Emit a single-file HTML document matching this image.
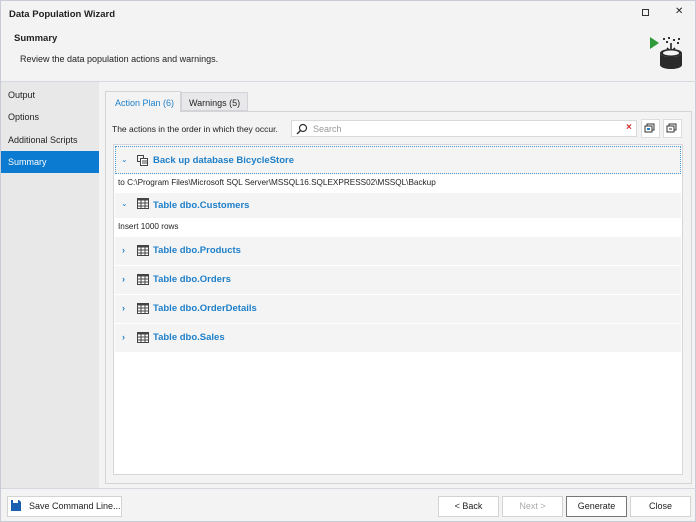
<!DOCTYPE html>
<html><head><style>
*{box-sizing:border-box;margin:0;padding:0}
body{width:696px;height:522px;overflow:hidden;font-family:"Liberation Sans",sans-serif;font-size:9px;color:#222;background:#f3f3f3;position:relative}
.win{position:absolute;left:0;top:0;width:696px;height:522px;border:1px solid #c9ccd6;background:#f3f3f3}
.abs{position:absolute}
.nav div{position:absolute;left:0;width:98px;height:22px;padding-left:7px;line-height:22px;font-size:9px}
.row{position:absolute;left:1px;right:1px;background:#f4f4f4}
.row .t{position:absolute;left:38px;color:#1e7fc9;font-weight:bold;font-size:9.5px}
.det{position:absolute;left:1px;right:1px;background:#fff;padding-left:3px;font-size:8.2px;line-height:18px}
.btn{position:absolute;top:495px;height:21px;background:#fff;border:1px solid #d3d3d3;text-align:center;line-height:19px;font-size:9px}
</style></head><body>
<div class="win">
<div class="abs" style="left:8px;top:8px;font-weight:bold;font-size:9.5px">Data Population Wizard</div>
<div class="abs" style="left:641px;top:8px;width:7px;height:7px;border:1px solid #333"></div>
<div class="abs" style="left:674px;top:5px;font-size:10px">✕</div>
<div class="abs" style="left:13px;top:32px;font-weight:bold;font-size:9.5px">Summary</div>
<div class="abs" style="left:19px;top:53px;font-size:9px">Review the data population actions and warnings.</div>
<svg class="abs" style="left:648px;top:34px" width="36" height="38" viewBox="0 0 36 38">
<polygon points="1,2 10,8 1,14" fill="#2e9a3a"/>
<g fill="#333"><rect x="14" y="3" width="2" height="2"/><rect x="19" y="2" width="2" height="2"/><rect x="24" y="4" width="2" height="2"/><rect x="29" y="3" width="2" height="2"/><rect x="17" y="6" width="2" height="2"/><rect x="28" y="7" width="2" height="2"/></g>
<path d="M22 8v9M18 13l4 4 4-4" stroke="#222" stroke-width="1.6" fill="none"/>
<path d="M11 18a11 4 0 0 0 22 0v12a11 4 0 0 1-22 0z" fill="#2a2a2a"/>
<ellipse cx="22" cy="18" rx="11" ry="4" fill="#2a2a2a"/>
<ellipse cx="22" cy="18" rx="8" ry="2.5" fill="#f3f3f3"/>
</svg>
<div class="abs" style="left:0;top:80px;width:696px;height:1px;background:#d6d8df"></div>
<div class="abs nav" style="left:0;top:81px;width:98px;height:406px;background:#e8e8e8">
<div style="top:2px">Output</div><div style="top:24px">Options</div><div style="top:47px">Additional Scripts</div>
<div style="top:69px;background:#0a7bd1;color:#fff">Summary</div></div>
<div class="abs" style="left:104px;top:90px;width:76px;height:21px;background:#f3f3f3;border:1px solid #d3d3d8;border-bottom:none;color:#1e7fc9;padding:6px 0 0 9px">Action Plan (6)</div>
<div class="abs" style="left:180px;top:91px;width:67px;height:19px;background:#e8e8ea;border:1px solid #d3d3d8;padding:5px 0 0 7px">Warnings (5)</div>
<div class="abs" style="left:104px;top:110px;width:587px;height:373px;border:1px solid #d3d3d8;border-top:none"></div>
<div class="abs" style="left:180px;top:110px;width:511px;height:1px;background:#d3d3d8"></div>
<div class="abs" style="left:111px;top:123px;font-size:8.5px">The actions in the order in which they occur.</div>
<div class="abs" style="left:290px;top:119px;width:346px;height:17px;background:#fff;border:1px solid #d9d9d9">
<svg class="abs" style="left:4px;top:2px" width="12" height="12"><circle cx="7" cy="5" r="3.5" stroke="#333" fill="none" stroke-width="1.2"/><path d="M4.5 7.5L1 11" stroke="#333" stroke-width="1.4"/></svg>
<span class="abs" style="left:21px;top:3px;color:#999">Search</span>
<span class="abs" style="left:334px;top:1px;color:#d03030;font-size:10px;font-weight:bold">×</span></div>
<div class="abs" style="left:640px;top:118px;width:19px;height:19px;background:#fff;border:1px solid #ddd"><svg width="17" height="17"><rect x="5" y="4" width="7" height="6" fill="none" stroke="#333"/><rect x="3" y="6" width="7" height="6" fill="#fff" stroke="#333"/><rect x="5" y="8" width="3" height="2" fill="#1e7fc9"/></svg></div>
<div class="abs" style="left:662px;top:118px;width:19px;height:19px;background:#fff;border:1px solid #ddd"><svg width="17" height="17"><rect x="5" y="4" width="7" height="6" fill="none" stroke="#333"/><rect x="3" y="6" width="7" height="6" fill="#fff" stroke="#333"/><path d="M5 9h3" stroke="#333"/></svg></div>
<div class="abs" style="left:112px;top:143px;width:570px;height:331px;background:#fff;border:1px solid #d6d6da">
<div class="row" style="top:1px;height:28px;border:1px dotted #4a9ad8"><span class="abs" style="left:5px;top:8px;color:#1e7fc9;font-size:8px">⌄</span>
<svg class="abs" style="left:21px;top:8px" width="12" height="12"><rect x="0.5" y="0.5" width="6" height="6" fill="none" stroke="#444"/><rect x="3.5" y="3.5" width="7" height="7" fill="#fff" stroke="#444"/><path d="M5 6h5M5 8h5" stroke="#444"/></svg><span class="t" style="top:8px;left:37px">Back up database BicycleStore</span></div>
<div class="det" style="top:29px;height:18px">to C:\Program Files\Microsoft SQL Server\MSSQL16.SQLEXPRESS02\MSSQL\Backup</div>
<div class="row" style="top:48px;height:25px"><span class="abs" style="left:6px;top:6px;color:#1e7fc9;font-size:8px">⌄</span><span class="t" style="top:7px">Table dbo.Customers</span></div>
<div class="det" style="top:73px;height:18px">Insert 1000 rows</div>
<div class="row" style="top:92px;height:28px"><span class="abs" style="left:7px;top:8px;color:#1e7fc9;font-weight:bold">›</span><span class="t" style="top:8px">Table dbo.Products</span></div>
<div class="row" style="top:121px;height:28px"><span class="abs" style="left:7px;top:8px;color:#1e7fc9;font-weight:bold">›</span><span class="t" style="top:8px">Table dbo.Orders</span></div>
<div class="row" style="top:150px;height:28px"><span class="abs" style="left:7px;top:8px;color:#1e7fc9;font-weight:bold">›</span><span class="t" style="top:8px">Table dbo.OrderDetails</span></div>
<div class="row" style="top:179px;height:28px"><span class="abs" style="left:7px;top:8px;color:#1e7fc9;font-weight:bold">›</span><span class="t" style="top:8px">Table dbo.Sales</span></div>
</div>
<svg class="abs" style="left:136px;top:197px" width="12" height="160">
<defs><g id="tb"><rect x="0.5" y="0.5" width="11" height="10" fill="#fff" stroke="#444"/><rect x="0.5" y="0.5" width="11" height="2" fill="#444"/><path d="M0 5h12M0 8h12M4 0v11M8 0v11" stroke="#444"/></g></defs>
<use href="#tb" y="0"/><use href="#tb" y="47"/><use href="#tb" y="76"/><use href="#tb" y="105"/><use href="#tb" y="134"/>
</svg>
<div class="abs" style="left:0;top:487px;width:696px;height:1px;background:#d6d8df"></div>
<div class="btn" style="left:6px;width:115px;text-align:left;padding-left:21px">Save Command Line...</div>
<svg class="abs" style="left:10px;top:499px" width="10" height="11"><path d="M0 0h8l2 2v9H0z" fill="#1a5fb0"/><rect x="2" y="0" width="5" height="3" fill="#fff"/></svg>
<div class="btn" style="left:437px;width:61px">&lt; Back</div>
<div class="btn" style="left:501px;width:61px;color:#aaa">Next &gt;</div>
<div class="btn" style="left:565px;width:61px;border-color:#777">Generate</div>
<div class="btn" style="left:629px;width:61px">Close</div>
</div>
</body></html>
